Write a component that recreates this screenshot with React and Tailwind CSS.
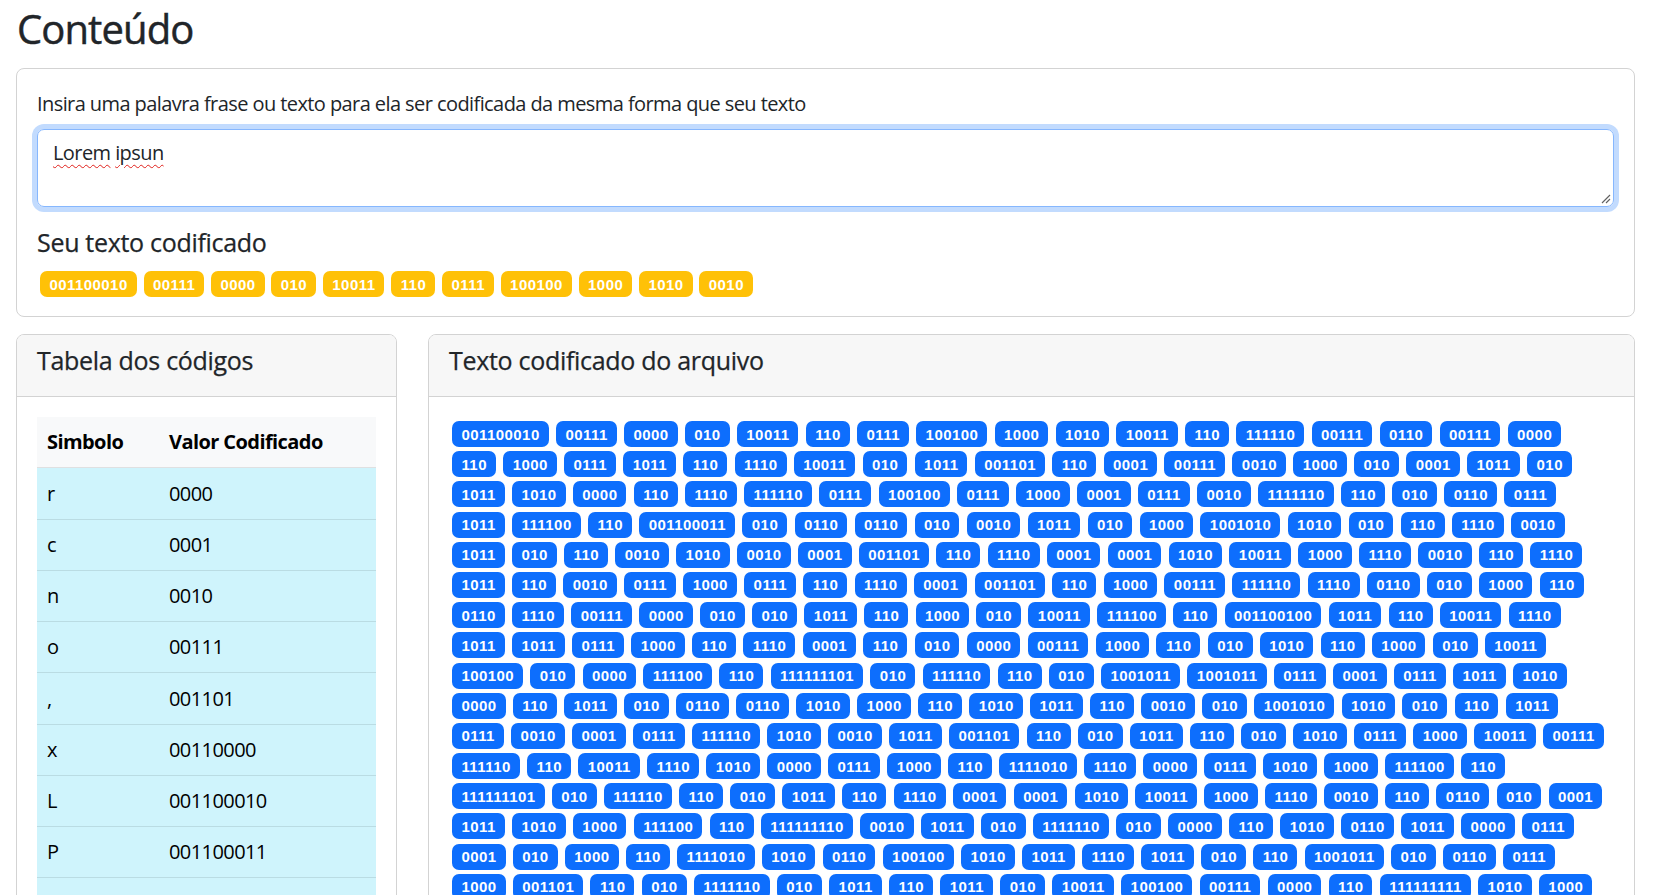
import React from "react";

const yellow = ["001100010", "00111", "0000", "010", "10011", "110", "0111", "100100", "1000", "1010", "0010"];

const rows = [
  "001100010 00111 0000 010 10011 110 0111 100100 1000 1010 10011 110 111110 00111 0110 00111 0000",
  "110 1000 0111 1011 110 1110 10011 010 1011 001101 110 0001 00111 0010 1000 010 0001 1011 010",
  "1011 1010 0000 110 1110 111110 0111 100100 0111 1000 0001 0111 0010 1111110 110 010 0110 0111",
  "1011 111100 110 001100011 010 0110 0110 010 0010 1011 010 1000 1001010 1010 010 110 1110 0010",
  "1011 010 110 0010 1010 0010 0001 001101 110 1110 0001 0001 1010 10011 1000 1110 0010 110 1110",
  "1011 110 0010 0111 1000 0111 110 1110 0001 001101 110 1000 00111 111110 1110 0110 010 1000 110",
  "0110 1110 00111 0000 010 010 1011 110 1000 010 10011 111100 110 001100100 1011 110 10011 1110",
  "1011 1011 0111 1000 110 1110 0001 110 010 0000 00111 1000 110 010 1010 110 1000 010 10011",
  "100100 010 0000 111100 110 111111101 010 111110 110 010 1001011 1001011 0111 0001 0111 1011 1010",
  "0000 110 1011 010 0110 0110 1010 1000 110 1010 1011 110 0010 010 1001010 1010 010 110 1011",
  "0111 0010 0001 0111 111110 1010 0010 1011 001101 110 010 1011 110 010 1010 0111 1000 10011 00111",
  "111110 110 10011 1110 1010 0000 0111 1000 110 1111010 1110 0000 0111 1010 1000 111100 110",
  "111111101 010 111110 110 010 1011 110 1110 0001 0001 1010 10011 1000 1110 0010 110 0110 010 0001",
  "1011 1010 1000 111100 110 111111110 0010 1011 010 1111110 010 0000 110 1010 0110 1011 0000 0111",
  "0001 010 1000 110 1111010 1010 0110 100100 1010 1011 1110 1011 010 110 1001011 010 0110 0111",
  "1000 001101 110 010 1111110 010 1011 110 1011 010 10011 100100 00111 0000 110 111111111 1010 1000",
  "0111 1010 110 0001 0111 0010 110 1011 0000 010 1110 110 1000 0111 1010 0110 110 010",
].map((r) => r.split(" "));

const table = [
  ["r", "0000"],
  ["c", "0001"],
  ["n", "0010"],
  ["o", "00111"],
  [",", "001101"],
  ["x", "00110000"],
  ["L", "001100010"],
  ["P", "001100011"],
  ["D", "001100100"],
  ["q", "001100101"],
];

function Badge({ children, color }) {
  return (
    <span
      className={
        "inline-flex h-[26px] items-center justify-center rounded-[7px] pl-[9.4px] pr-[9px] font-['Liberation_Sans',Arial,sans-serif] text-[15px] font-bold leading-none tracking-[0.45px] text-white " +
        (color === "yellow" ? "bg-[#ffc107]" : "bg-[#0d6efd]")
      }
    >
      {children}
    </span>
  );
}

function ResizeHandle() {
  return (
    <svg
      className="absolute bottom-[2px] right-[2px]"
      width="10"
      height="10"
      viewBox="0 0 10 10"
      fill="none"
    >
      <line x1="1" y1="9" x2="9" y2="1" stroke="#5f5f5f" strokeWidth="1.1" />
      <line x1="5" y1="9" x2="9" y2="5" stroke="#5f5f5f" strokeWidth="1.1" />
    </svg>
  );
}

const h5 = "text-[25px] font-normal leading-[30px] tracking-[-0.3px] [-webkit-text-stroke:0.25px_#212529]";

export default function App() {
  return (
    <div className="min-h-screen overflow-hidden bg-white font-['Open_Sans','Noto_Sans',sans-serif] text-[20px] leading-[30px] tracking-[-0.58px] text-[#212529]">
      <div className="ml-[16px] w-[1619px] pt-[5px]">
        <h2 className="mb-[15px] ml-px text-[40px] font-normal leading-[48px] tracking-[-0.9px] [-webkit-text-stroke:0.45px_#212529]">
          Conteúdo
        </h2>

        <div className="rounded-[8px] border border-[#d3d3d3] p-[20px]">
          <label className="mb-[10px] block">
            Insira uma palavra frase ou texto para ela ser codificada da mesma forma que seu texto
          </label>
          <div className="relative h-[78px] rounded-[7px] border border-[#86b7fe] px-[15px] py-[7.5px] shadow-[0_0_0_5px_#c2dbfe]">
            <span className="underline decoration-[#e0201b] decoration-wavy decoration-1 underline-offset-[4px]">
              Lorem
            </span>{" "}
            <span className="underline decoration-[#e0201b] decoration-wavy decoration-1 underline-offset-[4px]">
              ipsun
            </span>
            <ResizeHandle />
          </div>
          <h5 className={"mb-[10px] mt-[20px] " + h5}>Seu texto codificado</h5>
          <div className="flex h-[29px] items-start gap-x-[6.8px] pl-[3px] pt-[4px]">
            {yellow.map((b, i) => (
              <Badge key={i} color="yellow">
                {b}
              </Badge>
            ))}
          </div>
        </div>

        <div className="mt-[17px] flex items-start gap-[31px]">
          <div className="w-[381px] shrink-0 overflow-hidden rounded-[8px] border border-[#d3d3d3]">
            <div className="border-b border-[#d3d3d3] bg-[#f7f7f7] px-[20px] pb-[21px] pt-[10px]">
              <h5 className={h5}>Tabela dos códigos</h5>
            </div>
            <div className="p-[20px]">
              <table className="w-full border-separate border-spacing-0 text-left text-black">
                <thead>
                  <tr className="bg-[#f8f9fa]">
                    <th className="w-[122px] border-b border-[#dfe0e1] px-[10px] pb-[10px] pt-[10.25px] font-bold">
                      Simbolo
                    </th>
                    <th className="border-b border-[#dfe0e1] px-[10px] pb-[10px] pt-[10.25px] font-bold">
                      Valor Codificado
                    </th>
                  </tr>
                </thead>
                <tbody>
                  {table.map(([s, v], i) => (
                    <tr key={i} className="bg-[#cff4fc]">
                      <td className="border-b border-[#badce3] px-[10px] pb-[10px] pt-[10.25px]">{s}</td>
                      <td className="border-b border-[#badce3] px-[10px] pb-[10px] pt-[10.25px]">{v}</td>
                    </tr>
                  ))}
                </tbody>
              </table>
            </div>
          </div>

          <div className="min-w-0 flex-1 overflow-hidden rounded-[8px] border border-[#d3d3d3]">
            <div className="border-b border-[#d3d3d3] bg-[#f7f7f7] px-[20px] pb-[21px] pt-[10px]">
              <h5 className={h5}>Texto codificado do arquivo</h5>
            </div>
            <div className="px-[20px] pb-[20px] pt-[24px]">
              <div className="flex flex-col gap-y-[4.2px]">
                {rows.map((r, ri) => (
                  <div key={ri} className="flex gap-x-[7.3px] pl-[3px]">
                    {r.map((b, i) => (
                      <Badge key={i}>{b}</Badge>
                    ))}
                  </div>
                ))}
              </div>
            </div>
          </div>
        </div>
      </div>
    </div>
  );
}
